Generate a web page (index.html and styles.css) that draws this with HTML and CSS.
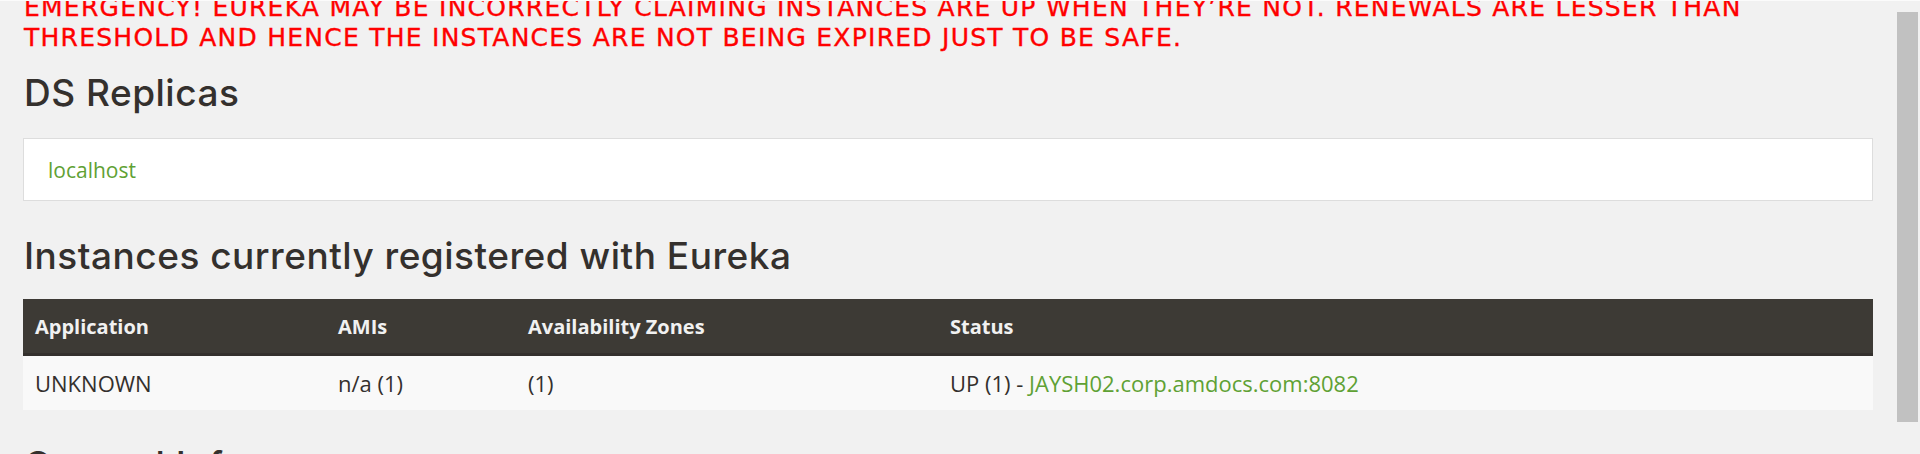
FILE: index.html
```html
<!DOCTYPE html>
<html lang="en">

<head>
    <meta charset="UTF-8">
    <meta name="viewport" content="width=device-width, initial-scale=1.0">
    <title>Eureka</title>
    <link rel="stylesheet" href="styles.css">
</head>

<body>
    <div class="page">
        <div class="container">
            <h4 class="emergency">EMERGENCY! EUREKA MAY BE INCORRECTLY CLAIMING INSTANCES ARE UP WHEN THEY’RE NOT. RENEWALS ARE LESSER THAN THRESHOLD AND HENCE THE INSTANCES ARE NOT BEING EXPIRED JUST TO BE SAFE.</h4>

            <h1>DS Replicas</h1>
            <ul class="list-group">
                <li class="list-group-item"><a href="#">localhost</a></li>
            </ul>

            <h1>Instances currently registered with Eureka</h1>
            <table class="instances">
                <thead>
                    <tr>
                        <th class="col-app">Application</th>
                        <th class="col-ami">AMIs</th>
                        <th class="col-zone">Availability Zones</th>
                        <th>Status</th>
                    </tr>
                </thead>
                <tbody>
                    <tr>
                        <td><b>UNKNOWN</b></td>
                        <td><b>n/a</b> (1)</td>
                        <td>(1)</td>
                        <td><b>UP</b> (1) - <a href="#">JAYSH02.corp.amdocs.com:8082</a></td>
                    </tr>
                </tbody>
            </table>

            <h1>General Info</h1>
        </div>

        <div class="scrollbar">
            <div class="thumb"></div>
        </div>
    </div>
</body>

</html>
```

FILE: styles.css
```css
html,
body {
    margin: 0;
    padding: 0;
    height: 100%;
    overflow: hidden;
}

body {
    font-family: "Open Sans", sans-serif;
    font-size: 21px;
    color: #34302d;
    background-color: #f1f1f1;
    border-top: 1px solid #fbfbfb;
}

a {
    color: #5fa134;
    text-decoration: none;
}

.page {
    display: flex;
    height: 100%;
}

.container {
    flex: 1;
    padding: 0 24px 0 23px;
    min-width: 0;
}

.emergency {
    max-width: 1790px;
    margin: -8px 0 0 1px;
    font-family: "DejaVu Sans", sans-serif;
    font-size: 25px;
    line-height: 30px;
    font-weight: normal;
    letter-spacing: 1.25px;
    color: #ff0000;
    -webkit-text-stroke: 0.35px #ff0000;
}

h1 {
    font-family: Inter, sans-serif;
    font-size: 37px;
    font-weight: 500;
    line-height: 44px;
    letter-spacing: 0.5px;
    margin: 33px 0 21px 1px;
}

.emergency + h1 {
    margin-top: 18px;
}

.list-group {
    list-style: none;
    margin: 23px 0 0;
    padding: 0;
}

.list-group-item {
    background-color: #fff;
    border: 1px solid #dddddd;
    padding: 16px 24px 15px;
    line-height: 30px;
}

.instances {
    width: 100%;
    border-collapse: collapse;
    table-layout: fixed;
}

.instances th,
.instances td {
    text-align: left;
    padding: 0 12px;
}

.instances th {
    height: 54px;
    background-color: #3d3a35;
    color: #f1f1f1;
    font-size: 20px;
    font-weight: 700;
    border-bottom: 3px solid #34302d;
}

.instances td {
    height: 54px;
    font-size: 22px;
    background-color: #f9f9f9;
}

.instances td b {
    font-weight: normal;
}

.col-app {
    width: 279px;
}

.col-ami {
    width: 166px;
}

.col-zone {
    width: 398px;
}

.scrollbar {
    width: 23px;
}

.thumb {
    width: 21px;
    height: 410px;
    margin-top: 11px;
    background-color: #c1c1c1;
}
```
